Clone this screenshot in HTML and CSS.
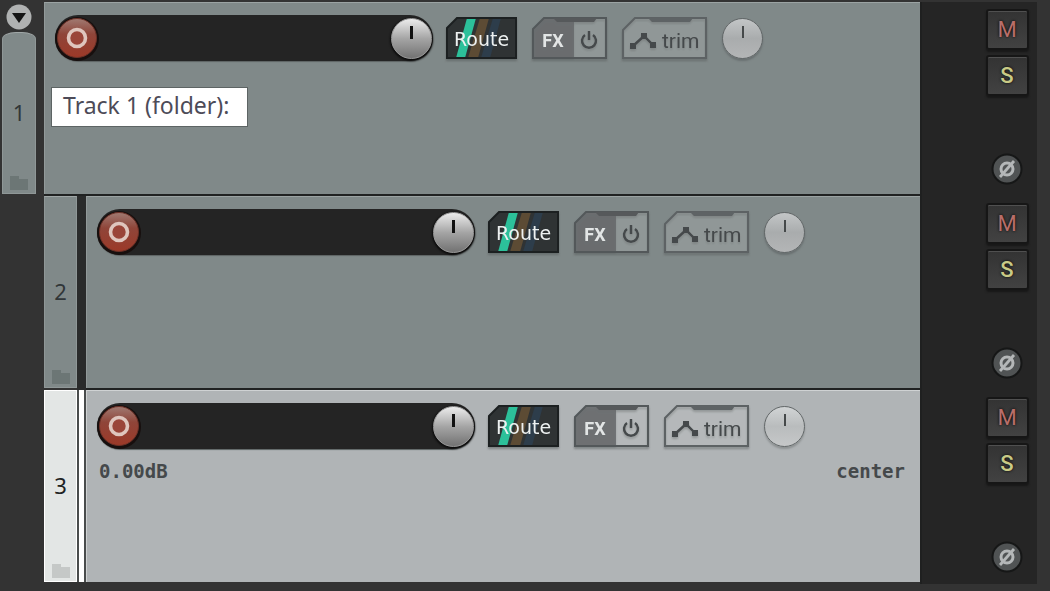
FILE: index.html
```
<!DOCTYPE html>
<html lang="en">
<head>
<meta charset="utf-8">
<title>Track panel</title>
<link rel="stylesheet" href="styles.css">
</head>
<body>
<svg class="defs" aria-hidden="true">
  <linearGradient id="red" x1="0" y1="0" x2="0" y2="1"><stop offset="0" stop-color="#a07a72"/><stop offset=".4" stop-color="#8f4539"/><stop offset="1" stop-color="#9c3928"/></linearGradient>
  <symbol id="rec" viewBox="0 0 46 46"><circle cx="22" cy="24" r="22" fill="#170f0e"/><circle cx="22" cy="23" r="19.5" fill="url(#red)" stroke="#6d3127"/><circle cx="22" cy="23" r="8.5" fill="#9a4539" stroke="#dfc6be" stroke-width="3.6"/></symbol>
  <symbol id="folder" viewBox="0 0 18 14"><path d="M0 0h9v3h9v11H0z"/></symbol>
  <symbol id="route" viewBox="0 0 71 42"><path d="M1 11 11 1H70V41H1z" fill="#2f3334"/><path d="M21 1H30L19 41H10z" fill="#2cc09a"/><path d="M34 1H43L32 41H22z" fill="#5c4b34"/><path d="M47 1H55L44 41H35z" fill="#2d3d4b"/><path d="M1 11 11 1H70V41H1z" fill="none" stroke="#1c2021" stroke-width="2"/></symbol>
  <symbol id="fxshape" viewBox="0 0 75 42"><path d="M1 12 12 1H42V41H1z" fill="#6a6c6f" fill-opacity=".85"/><path d="M42 1H74V41H42z" fill="#fff" fill-opacity=".16"/><path d="M1 12 12 1H74V41H1z" fill="none" stroke="#53585a" stroke-width="2"/><path d="M21 1H65L62 5H25z" fill="#56595b"/></symbol>
  <symbol id="trimshape" viewBox="0 0 85 42"><path d="M1 13 13 1H84V41H1z" fill="#fff" fill-opacity=".16" stroke="#5d6264" stroke-width="2"/><path d="M26 1H71L68 5H30z" fill="#5e6365"/></symbol>
  <symbol id="power" viewBox="0 0 18 18"><path d="M5 4a7 7 0 1 0 8 0M9 0v9" fill="none" stroke="#45494b" stroke-width="2.4"/></symbol>
  <symbol id="nodes" viewBox="0 0 26 18"><path d="M3 14 14 4 23 13" fill="none" stroke="#45494b" stroke-width="2.4"/><path d="M0 11h6v6H0zM11 1h6v6h-6zM20 10h6v6h-6z" fill="#45494b"/></symbol>
  <symbol id="phase" viewBox="0 0 32 32"><circle cx="16" cy="16" r="14.5" fill="#505354" stroke="#161717" stroke-width="2"/><circle cx="16" cy="16" r="6" fill="none" stroke="#b4b7b8" stroke-width="3"/><path d="M9 24 23 8" stroke="#b4b7b8" stroke-width="2.8"/></symbol>
</svg>
<main class="tracks">
  <section class="track" aria-label="Track 1">
    <div class="gutter">
      <button class="collapse" aria-label="Collapse folder"><svg viewBox="0 0 26 26"><circle cx="13" cy="13" r="12.5" fill="#b0b2b2"/><path d="M6 9H20L13 19z" fill="#151515"/></svg></button>
      <div class="index rounded"><span>1</span><svg class="folder"><use href="#folder"/></svg></div>
    </div>
    <div class="panel">
      <div class="controls">
        <div class="name"><button class="rec" aria-label="Record arm"><svg><use href="#rec"/></svg></button><input class="title" type="text" aria-label="Track name"><input class="knob dark" type="range" aria-label="Volume"></div>
        <button class="route"><svg class="shape"><use href="#route"/></svg><span>Route</span></button>
        <div class="fx"><svg class="shape"><use href="#fxshape"/></svg><button class="fxbtn">FX</button><button class="pwr" aria-label="Effects on"><svg><use href="#power"/></svg></button></div>
        <button class="trim"><svg class="shape"><use href="#trimshape"/></svg><svg class="nodes"><use href="#nodes"/></svg><span>trim</span></button>
        <input class="knob" type="range" aria-label="Pan">
      </div>
      <div class="tooltip" role="tooltip">Track 1 (folder):</div>
    </div>
    <div class="side"><button class="ms mute">M</button><button class="ms solo">S</button><button class="phase" aria-label="Invert phase"><svg><use href="#phase"/></svg></button></div>
  </section>
  <section class="track" aria-label="Track 2">
    <div class="gutter"></div>
    <div class="index"><span>2</span><svg class="folder"><use href="#folder"/></svg></div>
    <div class="rail"></div>
    <div class="panel">
      <div class="controls">
        <div class="name"><button class="rec" aria-label="Record arm"><svg><use href="#rec"/></svg></button><input class="title" type="text" aria-label="Track name"><input class="knob dark" type="range" aria-label="Volume"></div>
        <button class="route"><svg class="shape"><use href="#route"/></svg><span>Route</span></button>
        <div class="fx"><svg class="shape"><use href="#fxshape"/></svg><button class="fxbtn">FX</button><button class="pwr" aria-label="Effects on"><svg><use href="#power"/></svg></button></div>
        <button class="trim"><svg class="shape"><use href="#trimshape"/></svg><svg class="nodes"><use href="#nodes"/></svg><span>trim</span></button>
        <input class="knob" type="range" aria-label="Pan">
      </div>
    </div>
    <div class="side"><button class="ms mute">M</button><button class="ms solo">S</button><button class="phase" aria-label="Invert phase"><svg><use href="#phase"/></svg></button></div>
  </section>
  <section class="track selected" aria-label="Track 3">
    <div class="gutter"></div>
    <div class="index"><span>3</span><svg class="folder"><use href="#folder"/></svg></div>
    <div class="rail"></div>
    <div class="panel">
      <div class="controls">
        <div class="name"><button class="rec" aria-label="Record arm"><svg><use href="#rec"/></svg></button><input class="title" type="text" aria-label="Track name"><input class="knob dark" type="range" aria-label="Volume"></div>
        <button class="route"><svg class="shape"><use href="#route"/></svg><span>Route</span></button>
        <div class="fx"><svg class="shape"><use href="#fxshape"/></svg><button class="fxbtn">FX</button><button class="pwr" aria-label="Effects on"><svg><use href="#power"/></svg></button></div>
        <button class="trim"><svg class="shape"><use href="#trimshape"/></svg><svg class="nodes"><use href="#nodes"/></svg><span>trim</span></button>
        <input class="knob" type="range" aria-label="Pan">
      </div>
      <div class="values"><output>0.00dB</output><output>center</output></div>
    </div>
    <div class="side"><button class="ms mute">M</button><button class="ms solo">S</button><button class="phase" aria-label="Invert phase"><svg><use href="#phase"/></svg></button></div>
  </section>
</main>
</body>
</html>
```
FILE: styles.css
```
* { box-sizing: border-box; }
body { margin: 0; background: #333; font-family: "Noto Sans", sans-serif; }
button { border: 0; padding: 0; background: none; font: inherit; }
svg { display: block; }
.defs { position: absolute; width: 0; height: 0; }

.tracks { padding: 2px 13px 9px 0; }
.track { display: flex; min-height: 194px; }
.gutter { flex: none; width: 44px; padding: 2px 8px 2px 2px; display: flex; flex-direction: column; align-items: center; gap: 2px; }
.collapse svg { width: 26px; height: 26px; }
.index {
  flex: none; width: 33px; margin-bottom: 2px; padding-bottom: 3px;
  display: grid; grid-template-rows: 1fr auto; place-items: center;
  background: #808989; border: 1px solid #8f9797; border-top-color: #a0a7a7;
  font-size: 22px; line-height: 24px; color: #303638;
}
.index span { padding-top: 14px; }
.rounded { flex: 1; width: 34px; margin: 0; border-radius: 14px 14px 0 0 / 7px 7px 0 0; }
.folder { width: 18px; height: 14px; fill: #6c7675; }
.rail { flex: none; width: 9px; background: #2a2b2b; }

.panel {
  position: relative; flex: 1; min-width: 0; margin-bottom: 2px; padding: 12px 15px 0 10px;
  background: #808989; border-top: 1px solid #9ba3a3; border-left: 1px solid #929a9a;
  box-shadow: 0 2px #202222;
}
.controls { display: flex; align-items: center; gap: 15px; }
.name {
  flex: 0 1 378px; margin-right: -2px; height: 46px; display: flex; align-items: center;
  border-radius: 23px; background: #242424; box-shadow: 0 1px 1px #5c6363;
}
.rec { flex: none; }
.rec svg { width: 46px; height: 46px; }
.title { flex: 1; min-width: 0; height: 44px; border: 0; padding: 0 8px; background: none; color: #ddd; font: 18px "Noto Sans", sans-serif; }
.knob {
  appearance: none; flex: none; width: 41px; height: 41px; margin: 0; border-radius: 50%;
  background: linear-gradient(#45494a, #45494a) 50% 8px / 2px 12px no-repeat, linear-gradient(#c4c7c8, #a9acad 50%, #b4b6b7);
  border: 1px solid #626768; background-origin: border-box; box-shadow: 0 2px 2px #697071;
}
.knob::-webkit-slider-thumb { appearance: none; width: 0; height: 0; }
.knob.dark {
  margin-right: 1px; border-color: #999;
  background: linear-gradient(#111, #111) 50% 8px / 3px 13px no-repeat, linear-gradient(#f0f0f0, #a5a5a5 50%, #707070);
  background-origin: border-box; box-shadow: 0 1px 2px 1px #0c0c0c;
}
.route, .fx, .trim { position: relative; flex: none; height: 42px; display: flex; align-items: center; filter: drop-shadow(0 2px 1px #50575788); }
.shape { position: absolute; inset: 0; width: 100%; height: 100%; }
.route span, .trim span, .nodes, .fx button { position: relative; }
.route { width: 71px; justify-content: center; font: 19px/24px "DejaVu Sans", sans-serif; color: #edf1f1; }
.route span { padding-top: 2px; }
.fx { width: 75px; }
.fxbtn { width: 42px; height: 42px; padding-top: 5px; font: bold 18px/24px "Roboto", sans-serif; color: #e2e5e5; }
.pwr { flex: 1; height: 42px; padding: 3px 4px 0 0; display: grid; place-items: center; }
.pwr svg { width: 18px; height: 18px; }
.trim { width: 85px; padding: 5px 0 0 8px; gap: 6px; font: 21px/24px "Roboto", sans-serif; color: #45494b; }
.nodes { width: 26px; height: 18px; }
.tooltip {
  position: absolute; left: 6px; top: 84px; padding: 3px 18px 6px 11px;
  background: #fff; border: 1px solid #5d6464; font-size: 23px; line-height: 29px; color: #4d4b58; white-space: nowrap;
}
.values { display: flex; justify-content: space-between; padding: 10px 0 0 2px; font: bold 19px/24px "DejaVu Sans Mono", monospace; color: #45494b; }

.side { flex: none; width: 117px; padding: 7px 9px 11px 64px; display: flex; flex-direction: column; align-items: center; gap: 5px; background: #252525; border-left: 2px solid #1f2020; }
.ms {
  width: 43px; height: 41px; border: 2px solid #161616; border-radius: 3px;
  background: linear-gradient(#333, #424242); box-shadow: inset 0 1px #505050, 0 2px 2px #181818;
  font: 22px/24px "Roboto", sans-serif; text-shadow: 0 0 3px #000;
}
.mute { color: #b96e69; }
.solo { color: #c9ca86; font-weight: 500; }
.phase { margin-top: auto; }
.phase svg { width: 32px; height: 32px; }

.selected .index { background: #e3e6e5; border-color: #fff; color: #202324; }
.selected .folder { fill: #c5c8c7; }
.selected .rail { background: #fff; border: solid #494c4c; border-width: 0 2px 0 2px; margin-bottom: 2px; }
.selected .panel { background: #b0b4b6; border-color: #cfd2d3; box-shadow: none; }
.selected .knob:not(.dark) { background-image: linear-gradient(#45494a, #45494a), linear-gradient(#d2d5d6, #b9bcbd 50%, #c6c8c9); box-shadow: 0 2px 2px #8d9192; }
```
